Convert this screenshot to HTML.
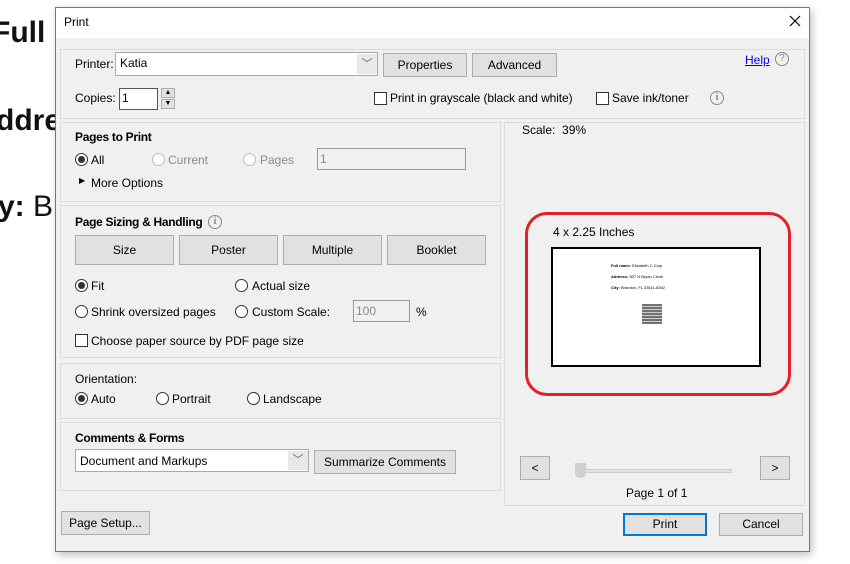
<!DOCTYPE html>
<html><head><meta charset="utf-8"><style>
*{box-sizing:border-box;margin:0;padding:0}
body{width:850px;height:564px;background:#fff;position:relative;overflow:hidden;font-family:"Liberation Sans",sans-serif;font-size:12px;color:#000}
.a{position:absolute;white-space:nowrap}
.bg{font-size:30px;font-weight:bold;color:#111}
.dlg{position:absolute;left:55px;top:7px;width:755px;height:545px;background:#f0f0f0;border:1px solid #777;box-shadow:2px 3px 8px rgba(0,0,0,.25)}
.title{position:absolute;left:0;top:0;width:753px;height:30px;background:#fff}
.grp{position:absolute;border:1px solid #dcdcdc}
.btn{position:absolute;background:#e1e1e1;border:1px solid #adadad;text-align:center}
.rad{position:absolute;width:13px;height:13px;border:1px solid #333;border-radius:50%;background:#fff}
.rad.on::after{content:"";position:absolute;left:2px;top:2px;width:7px;height:7px;border-radius:50%;background:#333}
.rad.dis{border-color:#bbb}
.chk{position:absolute;width:13px;height:13px;border:1px solid #333;background:#fff}
.inp{position:absolute;background:#fff;border:1px solid #aaa}
.gray{color:#8a8a8a}
.b{font-weight:bold;letter-spacing:-0.3px}
.info{position:absolute;width:14px;height:14px;border:1.5px solid #888;border-radius:50%;color:#888;font-size:10px;font-weight:bold;text-align:center;line-height:11px;font-family:"Liberation Serif",serif}
</style></head><body>
<div class="a bg" style="left:-8px;top:16px">Full n</div>
<div class="a bg" style="left:-4px;top:104px">ddre</div>
<div class="a bg" style="left:-2px;top:190px">y: <span style="font-weight:normal">B</span></div>

<div class="dlg">
<div class="title"></div>
<div class="a" style="left:8px;top:7px">Print</div>
<svg class="a" style="left:733px;top:7px" width="12" height="12"><path d="M1 1L11 11M11 1L1 11" stroke="#000" stroke-width="1.2"/></svg>

<div class="grp" style="left:4px;top:41px;width:745px;height:70px"></div>
<div class="a" style="left:19px;top:49px">Printer:</div>
<div class="inp" style="left:59px;top:44px;width:263px;height:24px;border-color:#aaa"></div>
<div class="a" style="left:64px;top:48px">Katia</div>
<div class="a" style="left:301px;top:46px;width:20px;height:20px;background:#e8e8e8;color:#666;text-align:center;font-size:11px;line-height:20px">﹀</div>
<div class="btn" style="left:327px;top:45px;width:84px;height:24px;line-height:22px">Properties</div>
<div class="btn" style="left:416px;top:45px;width:85px;height:24px;line-height:22px">Advanced</div>
<div class="a" style="left:689px;top:45px;color:#00e;text-decoration:underline">Help</div>
<div class="info" style="left:719px;top:44px;font-family:'Liberation Sans';font-weight:normal">?</div>
<div class="a" style="left:19px;top:83px">Copies:</div>
<div class="inp" style="left:63px;top:80px;width:39px;height:22px;border:1px solid #555"></div>
<div class="a" style="left:66px;top:83px">1</div>
<div class="btn" style="left:105px;top:80px;width:14px;height:10px;font-size:7px;line-height:8px">▲</div>
<div class="btn" style="left:105px;top:91px;width:14px;height:10px;font-size:7px;line-height:8px">▼</div>
<div class="chk" style="left:318px;top:84px"></div>
<div class="a" style="left:334px;top:83px;letter-spacing:-0.1px">Print in grayscale (black and white)</div>
<div class="chk" style="left:540px;top:84px"></div>
<div class="a" style="left:556px;top:83px">Save ink/toner</div>
<div class="info" style="left:654px;top:83px">i</div>

<div class="grp" style="left:4px;top:114px;width:441px;height:80px"></div>
<div class="a b" style="left:19px;top:122px">Pages to Print</div>
<div class="rad on" style="left:19px;top:145px"></div><div class="a" style="left:35px;top:145px">All</div>
<div class="rad dis" style="left:96px;top:145px"></div><div class="a gray" style="left:112px;top:145px">Current</div>
<div class="rad dis" style="left:187px;top:145px"></div><div class="a gray" style="left:204px;top:145px">Pages</div>
<div class="inp" style="left:261px;top:140px;width:149px;height:22px;background:#f0f0f0;border-color:#999"></div>
<div class="a gray" style="left:264px;top:144px">1</div>
<div class="a" style="left:23px;top:168px;font-size:8px">▶</div>
<div class="a" style="left:35px;top:168px">More Options</div>

<div class="grp" style="left:4px;top:197px;width:441px;height:153px"></div>
<div class="a b" style="left:19px;top:207px">Page Sizing &amp; Handling</div>
<div class="info" style="left:152px;top:207px">i</div>
<div class="btn" style="left:19px;top:227px;width:99px;height:30px;line-height:28px">Size</div>
<div class="btn" style="left:123px;top:227px;width:99px;height:30px;line-height:28px">Poster</div>
<div class="btn" style="left:227px;top:227px;width:99px;height:30px;line-height:28px">Multiple</div>
<div class="btn" style="left:331px;top:227px;width:99px;height:30px;line-height:28px">Booklet</div>
<div class="rad on" style="left:19px;top:271px"></div><div class="a" style="left:35px;top:271px">Fit</div>
<div class="rad" style="left:179px;top:271px"></div><div class="a" style="left:196px;top:271px">Actual size</div>
<div class="rad" style="left:19px;top:297px"></div><div class="a" style="left:35px;top:297px">Shrink oversized pages</div>
<div class="rad" style="left:179px;top:297px"></div><div class="a" style="left:196px;top:297px">Custom Scale:</div>
<div class="inp" style="left:297px;top:292px;width:57px;height:22px;background:#f0f0f0;border-color:#999"></div>
<div class="a gray" style="left:300px;top:296px">100</div>
<div class="a" style="left:360px;top:297px">%</div>
<div class="chk" style="left:19px;top:326px"></div><div class="a" style="left:35px;top:326px">Choose paper source by PDF page size</div>

<div class="grp" style="left:4px;top:355px;width:441px;height:56px"></div>
<div class="a" style="left:19px;top:364px">Orientation:</div>
<div class="rad on" style="left:19px;top:384px"></div><div class="a" style="left:35px;top:384px">Auto</div>
<div class="rad" style="left:100px;top:384px"></div><div class="a" style="left:116px;top:384px">Portrait</div>
<div class="rad" style="left:191px;top:384px"></div><div class="a" style="left:207px;top:384px">Landscape</div>

<div class="grp" style="left:4px;top:414px;width:441px;height:69px"></div>
<div class="a b" style="left:19px;top:423px">Comments &amp; Forms</div>
<div class="inp" style="left:19px;top:441px;width:234px;height:23px"></div>
<div class="a" style="left:24px;top:446px">Document and Markups</div>
<div class="a" style="left:232px;top:443px;width:20px;height:19px;background:#e8e8e8;color:#666;text-align:center;font-size:11px;line-height:19px">﹀</div>
<div class="btn" style="left:258px;top:442px;width:142px;height:24px;line-height:22px">Summarize Comments</div>

<div class="grp" style="left:448px;top:114px;width:301px;height:384px"></div>
<div class="a" style="left:466px;top:115px">Scale:&nbsp; 39%</div>
<div class="a" style="left:469px;top:204px;width:266px;height:184px;border:3px solid #e3202a;border-radius:22px"></div>
<div class="a" style="left:497px;top:217px">4 x 2.25 Inches</div>
<div class="a" style="left:495px;top:239px;width:210px;height:120px;background:#fff;border:2px solid #000">
 <div class="a" style="left:58px;top:14px;font-size:4px"><b>Full name:</b> Elizabeth C Corp</div>
 <div class="a" style="left:58px;top:25px;font-size:4px"><b>Address:</b> 507 N Bryan Circle</div>
 <div class="a" style="left:58px;top:36px;font-size:4px"><b>City:</b> Brandon, FL 33511-8302</div>
 <div class="a" style="left:89px;top:55px;width:20px;height:20px;background:repeating-linear-gradient(0deg,#444 0 2px,#bbb 2px 3px),#555;opacity:.75"></div>
</div>
<div class="btn" style="left:464px;top:448px;width:30px;height:24px;line-height:22px">&lt;</div>
<div class="a" style="top:461px;width:156px;height:4px;background:#e0e0e0;border:1px solid #ccc;left:520px"></div>
<div class="a" style="left:519px;top:455px;width:11px;height:15px;background:#cfcfcf;border-radius:0 0 5px 5px"></div>
<div class="btn" style="left:704px;top:448px;width:30px;height:24px;line-height:22px">&gt;</div>
<div class="a" style="left:570px;top:478px">Page 1 of 1</div>

<div class="btn" style="left:5px;top:503px;width:89px;height:24px;line-height:22px">Page Setup...</div>
<div class="btn" style="left:567px;top:505px;width:84px;height:23px;line-height:19px;border:2px solid #0078d7">Print</div>
<div class="btn" style="left:663px;top:505px;width:84px;height:23px;line-height:21px">Cancel</div>
</div>
</body></html>
